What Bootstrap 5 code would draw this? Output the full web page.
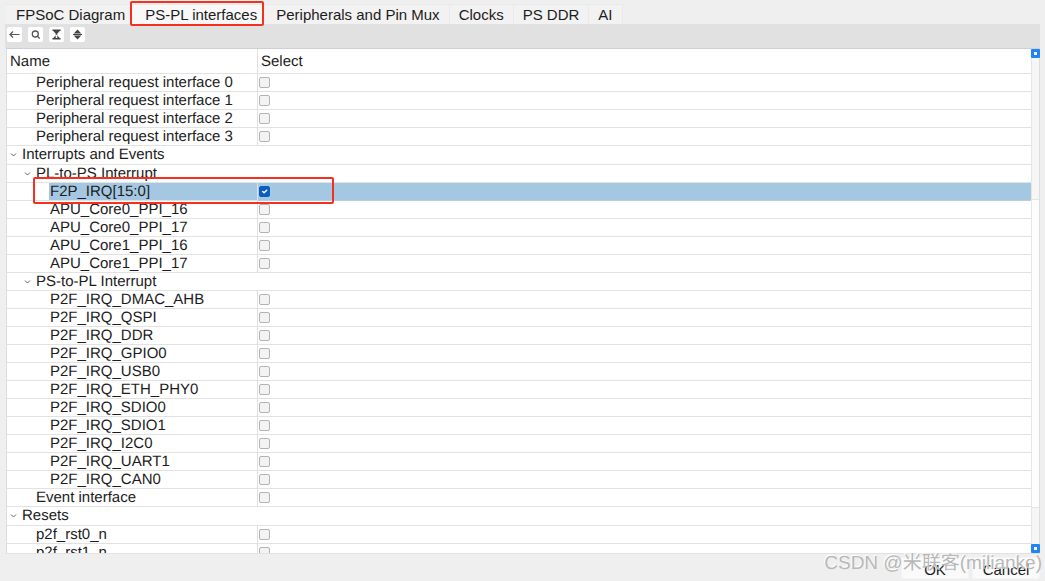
<!DOCTYPE html>
<html lang="en">
<head>
<meta charset="utf-8">
<meta name="viewport" content="width=device-width, initial-scale=1">
<title>PS-PL interfaces</title>
<link href="https://cdn.jsdelivr.net/npm/bootstrap@5.3.0/dist/css/bootstrap.min.css" rel="stylesheet">
<style>
  body { background: #efefef; color: #1c1c1c; font: 15px/18px "Liberation Sans", "Noto Sans CJK SC", sans-serif; text-rendering: geometricPrecision; }
  .tabs { padding: 4px 0 0 6px; }
  .tabs .nav-link { color: #1c1c1c; background: #f2f2f2; border: 1px solid #eaeaea; border-width: 1px 1px 0 0; border-radius: 0; padding: 0 9px; height: 20px; line-height: 19px; }
  .tabs .nav-link.active { color: #1c1c1c; background: #f8f8f8; border-color: #eaeaea; padding: 0 6px 0 14px; line-height: 17px; }
  .tabs .wide { padding-left: 12px; }
  .tabs .first { padding: 0 5px 0 10px; }
  .callout { position: absolute; border: 2px solid #f5301f; border-radius: 2px; pointer-events: none; z-index: 3; }
  .callout-tab { inset: -3px 0 -2px -1px; }
  .callout-row { left: 26px; top: -6px; width: 301px; height: 27px; }
  .tools { margin: 0 5px; background: #e1e1e1; height: 24px; padding: 3px 2px; gap: 6px; }
  .tools .btn { width: 15px; height: 15px; background: #fff; border-radius: 2px; line-height: 0; }
  .tools svg { width: 13px; height: 13px; }
  .pane { min-height: 0; margin: 0 5px 0 6px; background: #fff; border-top: 1px solid #cfcfd2; border-left: 1px solid #dcdcdc; border-bottom: 1px solid #e2e2e2; }
  .tree { table-layout: fixed; border-collapse: separate; border-spacing: 0; line-height: 17px; }
  .tree th, .tree td { padding: 0; border-bottom: 1px solid #e2e2e2; height: 18px; white-space: nowrap; vertical-align: middle; font-weight: 400; }
  .tree thead th { height: 25px; padding: 1px 0 0 3px; }
  .tree .col-name { width: 251px; }
  .tree tr > :first-child { position: relative; border-right: 1px solid #e2e2e2; }
  .tree tr > [colspan] { border-right: 0; }
  .tree .top td { height: 19px; }
  .d1 label { padding-left: 29px; }
  .d2 .name { margin-left: 42px; padding-left: 1px; }
  .tree label { display: block; }
  .twist { width: 15px; height: 17px; line-height: 0; border: 0; padding: 0 0 0 3px; background: none; }
  .sub .twist { margin-left: 14px; }
  .picked .name, .picked td + td { background: #a4c8e1; }
  .tree .picked td + td { border-bottom-color: #b9cfdd; }
  .form-check-input.tick { display: block; width: 11px; height: 11px; margin: 0 0 0 1px; border: 1px solid #b4b4b4; border-radius: 2px; background-color: #f3f3f3; }
  .form-check-input.tick:checked { background-color: #0a5fbe; border-color: #0a5fbe; }
  .track { width: 9px; background: #f6f6f6; border-left: 1px solid #e6e6e6; border-right: 1px solid #dedede; }
  .thumb { flex: 309; background: #fdfdfd; border: 1px solid #e4e4e4; border-width: 1px 0; }
  .gap-top { flex: 142; }
  .gap-bottom { flex: 36; }
  .step { width: 9px; height: 9px; margin-left: -1px; padding: 3px; background: #1f86f5; border: 0; border-radius: 1px; line-height: 0; }
  .step span { display: block; width: 3px; height: 3px; background: #fff; }
  .foot { height: 27px; padding: 3px 5px 2px; gap: 3px; }
  .foot .btn { width: 68px; height: 22px; padding: 3px 0 0; background: #fafafa; color: #1c1c1c; font-size: 15px; line-height: 18px; border: 1px solid #f4f4f4; border-radius: 2px; }
  .stamp { position: absolute; right: 3px; bottom: 6px; font-size: 19px; line-height: 22px; color: #b8b8b8; text-shadow: -1px -1px 0 #fff; pointer-events: none; white-space: nowrap; }
</style>
</head>
<body class="d-flex flex-column vh-100 overflow-hidden">
<ul class="tabs nav flex-nowrap" role="tablist">
  <li class="nav-item"><button class="nav-link first" role="tab">FPSoC Diagram</button></li>
  <li class="nav-item position-relative"><button class="nav-link active" role="tab" aria-selected="true">PS-PL interfaces</button><span class="callout callout-tab"></span></li>
  <li class="nav-item"><button class="nav-link wide" role="tab">Peripherals and Pin Mux</button></li>
  <li class="nav-item"><button class="nav-link" role="tab">Clocks</button></li>
  <li class="nav-item"><button class="nav-link" role="tab">PS DDR</button></li>
  <li class="nav-item"><button class="nav-link" role="tab">AI</button></li>
</ul>
<div class="tools d-flex" role="toolbar">
  <button class="btn p-0 border-0" aria-label="Back"><svg viewBox="0 0 13 13" fill="none" stroke="#555" stroke-width="1.2"><path d="M11.5 6.5H2M5 3.5l-3 3 3 3"/></svg></button>
  <button class="btn p-0 border-0" aria-label="Search"><svg viewBox="0 0 13 13" fill="none" stroke="#555" stroke-width="1.3"><circle cx="6.3" cy="6" r="3"/><path d="M8.3 8l2.4 2.6"/></svg></button>
  <button class="btn p-0 border-0" aria-label="Collapse all"><svg viewBox="0 0 13 13" fill="#444"><path d="M2.5 1.5h8v1.5h-8zM2.5 10h8v1.5h-8zM5.7 2h1.6v9H5.7zM3.3 3h6.4L6.5 6.5zM3.3 10h6.4L6.5 6.5z"/></svg></button>
  <button class="btn p-0 border-0" aria-label="Expand all"><svg viewBox="0 0 13 13" fill="#444"><path d="M6.5 1.5l3.8 4H2.7zM2.7 7.5h7.6l-3.8 4zM2 6h9v1H2z"/></svg></button>
</div>
<main class="pane d-flex flex-fill overflow-hidden">
  <div class="flex-fill overflow-hidden">
    <table class="tree w-100">
      <colgroup><col class="col-name"><col></colgroup>
      <thead><tr><th>Name</th><th>Select</th></tr></thead>
      <tbody id="rows"></tbody>
    </table>
  </div>
  <div class="track d-flex flex-column">
    <button class="step" aria-label="Scroll up"><span></span></button>
    <div class="gap-top"></div>
    <div class="thumb"></div>
    <div class="gap-bottom"></div>
    <button class="step" aria-label="Scroll down"><span></span></button>
  </div>
</main>
<footer class="foot d-flex justify-content-end position-relative">
  <button class="btn">OK</button>
  <button class="btn">Cancel</button>
  <span class="stamp">CSDN @米联客(milianke)</span>
</footer>
<script>
  // Each entry: kind (t = top group, s = sub group, 1/2 = leaf depth) and its label
  const items = [
    ['1','Peripheral request interface 0'],['1','Peripheral request interface 1'],
    ['1','Peripheral request interface 2'],['1','Peripheral request interface 3'],
    ['t','Interrupts and Events'],['s','PL-to-PS Interrupt'],['2','F2P_IRQ[15:0]',true],
    ['2','APU_Core0_PPI_16'],['2','APU_Core0_PPI_17'],['2','APU_Core1_PPI_16'],['2','APU_Core1_PPI_17'],
    ['s','PS-to-PL Interrupt'],['2','P2F_IRQ_DMAC_AHB'],['2','P2F_IRQ_QSPI'],['2','P2F_IRQ_DDR'],
    ['2','P2F_IRQ_GPIO0'],['2','P2F_IRQ_USB0'],['2','P2F_IRQ_ETH_PHY0'],['2','P2F_IRQ_SDIO0'],
    ['2','P2F_IRQ_SDIO1'],['2','P2F_IRQ_I2C0'],['2','P2F_IRQ_UART1'],['2','P2F_IRQ_CAN0'],
    ['1','Event interface'],['t','Resets'],['1','p2f_rst0_n'],['1','p2f_rst1_n']
  ];
  const chevron = '<svg width="7" height="17" viewBox="0 0 7 17" fill="none" stroke="#666"><path d="M1 7.5l2.5 2.5L6 7.5"/></svg>';
  document.getElementById('rows').innerHTML = items.map(([kind, text, on], i) => {
    if (kind === 't' || kind === 's')
      return `<tr class="${kind === 't' ? 'top' : 'sub'}"><td colspan="2"><div class="d-flex"><button class="twist text-start" aria-label="Toggle ${text}">${chevron}</button><span>${text}</span></div></td></tr>`;
    return `<tr class="d${kind}${on ? ' picked' : ''}"><td><label class="name" for="c${i}">${text}</label>${on ? '<span class="callout callout-row"></span>' : ''}</td>` +
      `<td><input class="form-check-input tick" type="checkbox" id="c${i}"${on ? ' checked' : ''}></td></tr>`;
  }).join('');
</script>
<script src="https://cdn.jsdelivr.net/npm/bootstrap@5.3.0/dist/js/bootstrap.bundle.min.js"></script>
</body>
</html>
